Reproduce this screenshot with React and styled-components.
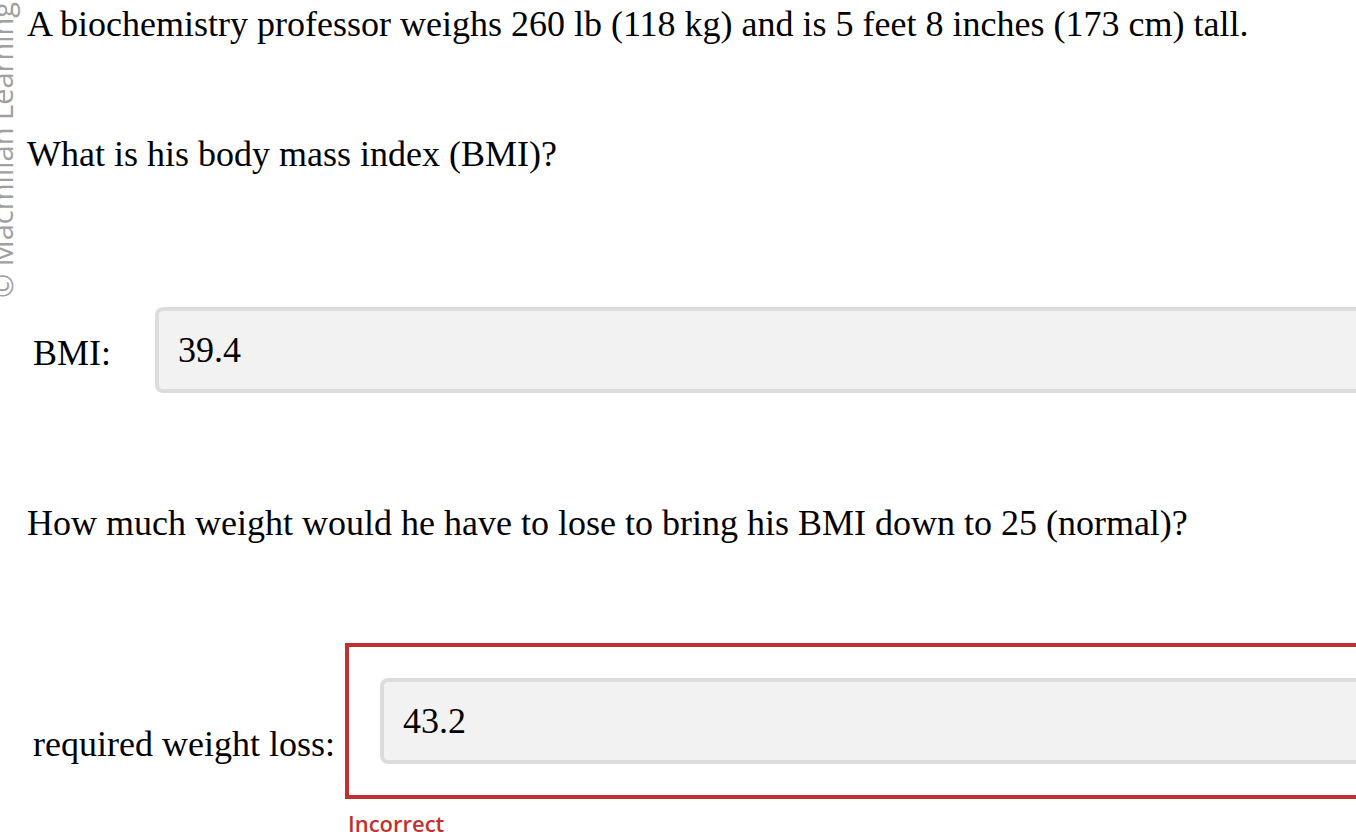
import React from "react";
import styled, { createGlobalStyle } from "styled-components";

const GlobalStyle = createGlobalStyle`
  html, body {
    margin: 0;
    padding: 0;
    overflow: hidden;
    background: #fff;
  }
  body {
    font-family: "Liberation Serif", "Times New Roman", serif;
    color: #000;
  }
`;

const Page = styled.div`
  position: relative;
  width: 1500px;
  height: 832px;
  padding: 2px 0 0 27px;
  box-sizing: border-box;
`;

// vertical copyright strip along the left edge
const Watermark = styled.div`
  position: absolute;
  left: -7px;
  top: 298px;
  transform-origin: 0 0;
  transform: rotate(-90deg);
  white-space: nowrap;
  font-family: "Open Sans", "Liberation Sans", sans-serif;
  font-size: 29px;
  line-height: 18px;
  color: #a0a0a0;
`;

const Question = styled.p`
  margin: 0 0 ${(p) => p.$gap}px;
  font-size: 36px;
  line-height: 44px;
`;

const Row = styled.div`
  display: flex;
  align-items: ${(p) => (p.$bottom ? "flex-end" : "center")};
  margin: 0 0 ${(p) => p.$gap || 0}px 6px;
`;

const Label = styled.span`
  font-size: 36px;
  line-height: 44px;
  margin-right: ${(p) => p.$space}px;
  margin-bottom: ${(p) => p.$lift || 0}px;
  padding-top: ${(p) => p.$drop || 0}px;
  white-space: nowrap;
`;

const Field = styled.div`
  flex: 1;
  height: 86px;
  box-sizing: border-box;
  border: 4px solid #dcdcdc;
  border-radius: 8px;
  background: #f2f2f2;
  padding: 0 0 0 19px;
  display: flex;
  align-items: center;
  font-size: 36px;
  line-height: 44px;
`;

const FeedbackBox = styled.div`
  flex: 1;
  position: relative;
  border: 4px solid #c1302e;
  padding: 31px 0 31px 31px;
`;

const FeedbackText = styled.div`
  position: absolute;
  left: -1px;
  top: 162px;
  font-family: "Open Sans", "Liberation Sans", sans-serif;
  font-weight: 600;
  font-size: 22px;
  line-height: 28px;
  color: #c1302e;
`;

export default function App() {
  return (
    <>
      <GlobalStyle />
      <Page>
        <Watermark>© Macmillan Learning</Watermark>
        <Question $gap={86}>
          A biochemistry professor weighs 260 lb (118 kg) and is 5 feet 8 inches (173 cm) tall.
        </Question>
        <Question $gap={131}>What is his body mass index (BMI)?</Question>
        <Row $gap={108}>
          <Label $space={44} $drop={6}>BMI:</Label>
          <Field>39.4</Field>
        </Row>
        <Question $gap={98}>
          How much weight would he have to lose to bring his BMI down to 25 (normal)?
        </Question>
        <Row $bottom>
          <Label $space={10} $lift={33}>required weight loss:</Label>
          <FeedbackBox>
            <Field>43.2</Field>
            <FeedbackText>Incorrect</FeedbackText>
          </FeedbackBox>
        </Row>
      </Page>
    </>
  );
}
